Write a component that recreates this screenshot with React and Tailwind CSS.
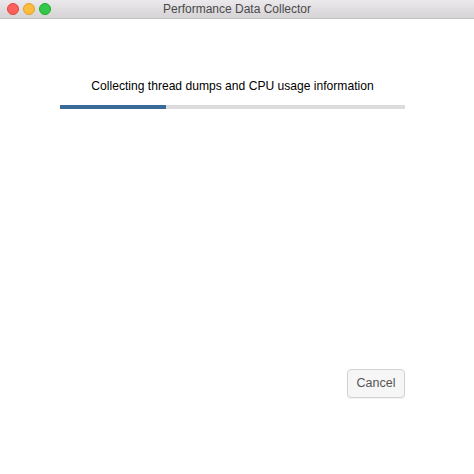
import React from 'react';

export default function App() {
  const progress = 30.7; // percent of the bar filled

  return (
    <div className="w-[474px] h-[474px] bg-white flex flex-col font-['Liberation_Sans',Arial,sans-serif] overflow-hidden">
      {/* title bar */}
      <div className="relative h-[19px] flex items-center justify-center bg-gradient-to-b from-[#ebe9eb] to-[#d5d3d5] border-b border-[#c4c2c4]">
        <div className="absolute left-[7px] top-[3px] flex gap-[4px]">
          <span className="w-[12px] h-[12px] rounded-full bg-[#fc605c] border border-[#e0443e]" />
          <span className="w-[12px] h-[12px] rounded-full bg-[#fdbc40] border border-[#dea123]" />
          <span className="w-[12px] h-[12px] rounded-full bg-[#34c84a] border border-[#1aab29]" />
        </div>
        <span className="text-[12px] text-[#4a4a4a] leading-none">Performance Data Collector</span>
      </div>

      {/* content */}
      <div className="flex-1 flex flex-col pl-[60px] pr-[69px] pt-[61px] pb-[76px]">
        <p className="text-[12.1px] text-black text-center leading-none">
          Collecting thread dumps and CPU usage information
        </p>
        <div className="mt-[13px] h-[4px] bg-[#dcdcdc]">
          <div className="h-full bg-[#3a6b98]" style={{ width: `${progress}%` }} />
        </div>
        <div className="flex-1" />
        <div className="flex justify-end">
          <button className="w-[58px] h-[29px] rounded-[4px] border border-[#d2d2d2] bg-[#f6f6f6] text-[12.5px] text-[#555] shadow-[0_1px_1px_rgba(0,0,0,0.05)]">
            Cancel
          </button>
        </div>
      </div>
    </div>
  );
}
